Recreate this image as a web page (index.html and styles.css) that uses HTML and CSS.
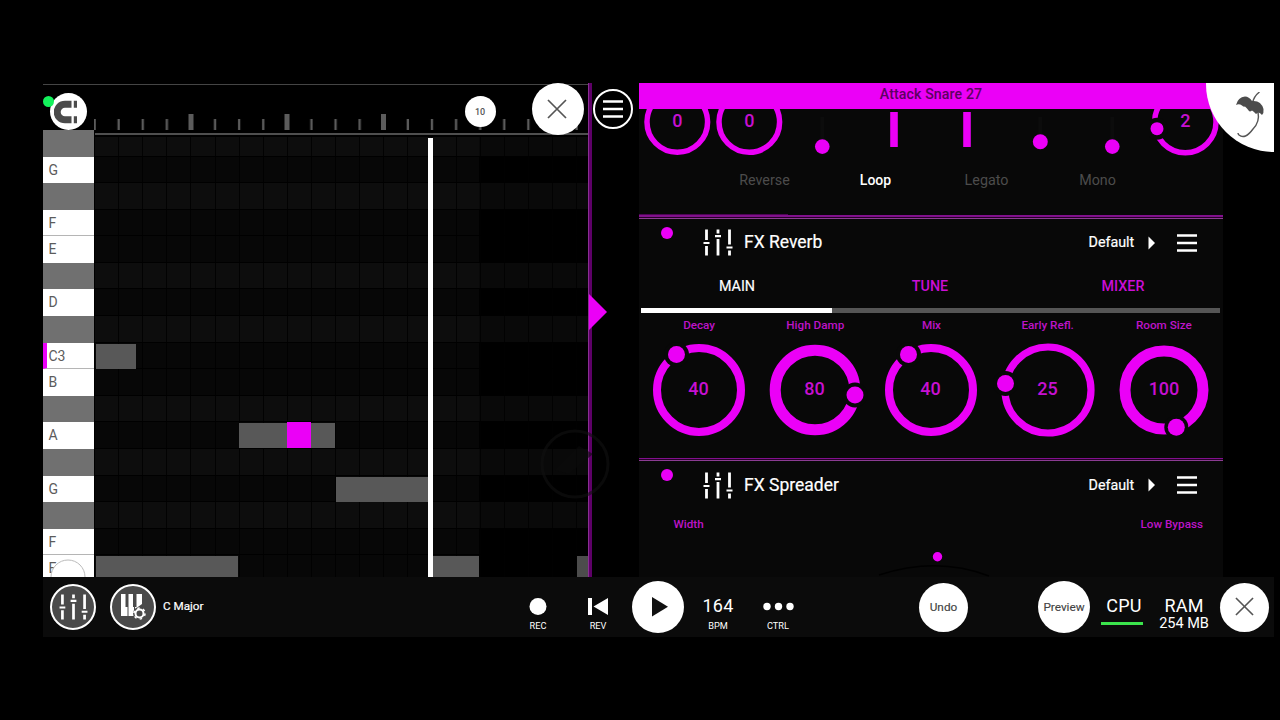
FILE: index.html
```html
<!DOCTYPE html>
<html lang="en">
<head>
<meta charset="utf-8">
<title>Piano roll</title>
<link rel="stylesheet" href="styles.css">
</head>
<body>
<svg width="0" height="0" class="defs">
  <defs>
    <symbol id="mixer" viewBox="0 0 30 27">
      <path d="M3.500 .500v10.500M3.500 17v9.500M15 .500v4M15 10v16.500M26.500 .500v15M26.500 21.500v5" fill="none" stroke="#fff" stroke-width="2.800"/>
      <path d="M.500 14h6M12 7.200h6M23.500 18.500h6" fill="none" stroke="#fff" stroke-width="2.200"/>
    </symbol>
    <symbol id="cross" viewBox="0 0 20 20"><path d="M1 1L19 19M19 1L1 19" stroke="#555" stroke-width="1.700"/></symbol>
    <symbol id="lines" viewBox="0 0 20 18"><path d="M0 1.500h20M0 9h20M0 16.500h20" stroke="#fff" stroke-width="2.600"/></symbol>
  </defs>
</svg>
<div class="app">
  <main class="main">
    <section class="roll">
      <header class="ruler">
        <svg class="ticks" width="494" height="16">
          <defs><pattern id="beat" width="96.4" height="16" patternUnits="userSpaceOnUse" x="-3">
            <path d="M2.500 5h2.300v11h-2.300zM26.500 5h2.300v11h-2.300zM50.600 5h2.300v11h-2.300zM74.700 5h2.300v11h-2.300z" fill="#5c5c5c"/>
          </pattern></defs>
          <rect width="494" height="16" fill="url(#beat)"/>
          <path d="M94.500 0h5v16h-5zM190.500 0h5v16h-5zM287 0h5v16h-5z" fill="#5c5c5c"/>
        </svg>
      </header>
      <div class="board">
        <div class="keys">
          <div class="key dark"></div><div class="key">G</div><div class="key dark"></div><div class="key line">F</div><div class="key">E</div>
          <div class="key dark"></div><div class="key">D</div><div class="key dark"></div><div class="key line root">C3</div><div class="key">B</div>
          <div class="key dark"></div><div class="key">A</div><div class="key dark"></div><div class="key">G</div><div class="key dark"></div>
          <div class="key line">F</div><div class="key">E</div>
          <svg class="keydial" width="36" height="18"><circle cx="18" cy="18" r="17" fill="#fff" stroke="#bbb"/></svg>
        </div>
        <div class="field">
          <div class="row dark"></div><div class="row"></div><div class="row dark"></div><div class="row"></div><div class="row"></div>
          <div class="row dark"></div><div class="row"></div><div class="row dark"></div><div class="row"></div><div class="row"></div>
          <div class="row dark"></div><div class="row"></div><div class="row dark"></div><div class="row"></div><div class="row dark"></div>
          <div class="row"></div><div class="row"></div>
          <div class="edge"></div>
          <div class="note n1"></div><div class="note n2"></div><div class="note n3"></div><div class="note n4"></div>
          <div class="note n5"></div><div class="note n6"></div><div class="note n7"></div>
          <div class="playhead"></div>
        </div>
      </div>
      <div class="snap"><svg width="24" height="24" viewBox="0 0 24 24"><path d="M17.500 4.200H11a7.800 7.800 0 0 0 0 15.600h6.500" fill="none" stroke="#4b4b4b" stroke-width="7"/><path d="M19.800 .700h3.200v7h-3.200zM19.800 16.300h3.200v7h-3.200z" fill="#4b4b4b"/></svg></div>
      <i class="led"></i>
      <div class="marker">10</div>
      <div class="close-roll"><svg width="20" height="20"><use href="#cross"/></svg></div>
    </section>
    <div class="divider"><svg class="arrow" width="18" height="36"><path d="M0 0L18 18L0 36z" fill="#eb00f7"/></svg></div>
    <div class="gutter"><div class="menu-round"><svg width="20" height="18"><use href="#lines"/></svg></div></div>
    <section class="panel">
      <h1 class="title">Attack Snare 27</h1>
      <div class="controls">
        <svg viewBox="0 0 72.6 50"><circle cx="36.300" cy="13" r="30.300" class="ring w5"/><text x="36.300" y="18" class="val">0</text></svg>
        <svg viewBox="0 0 72.6 50"><circle cx="36.300" cy="13" r="30.300" class="ring w5"/><text x="36.300" y="18" class="val">0</text></svg>
        <svg viewBox="0 0 72.6 50"><path d="M36.300 8v22" stroke="#0c0c0c" stroke-width="4"/><circle cx="36.300" cy="37.600" r="7.300" class="dot"/></svg>
        <svg viewBox="0 0 72.6 50"><path d="M36 3v35" stroke="#eb00f7" stroke-width="7.600"/></svg>
        <svg viewBox="0 0 72.6 50"><path d="M36 3v35" stroke="#eb00f7" stroke-width="7.600"/></svg>
        <svg viewBox="0 0 72.6 50"><path d="M36.300 8v18" stroke="#0c0c0c" stroke-width="4"/><circle cx="36.300" cy="32.800" r="7.500" class="dot"/></svg>
        <svg viewBox="0 0 72.6 50"><path d="M36.300 8v22" stroke="#0c0c0c" stroke-width="4"/><circle cx="36.300" cy="37.600" r="7.300" class="dot"/></svg>
        <svg viewBox="0 0 72.6 50"><circle cx="36.300" cy="13" r="30.700" class="ring w5"/><circle cx="8" cy="19.700" r="11" class="gap"/><circle cx="8" cy="19.700" r="6.500" class="dot"/><text x="36.300" y="18" class="val">2</text></svg>
      </div>
      <div class="modes"><span>Reverse</span><span class="on">Loop</span><span>Legato</span><span>Mono</span></div>
      <div class="rule"><i></i></div>
      <div class="fx-head">
        <i class="power"></i><svg class="mix" width="30" height="27"><use href="#mixer"/></svg><h2>FX Reverb</h2>
        <span class="preset">Default</span><svg class="tri" width="8" height="14"><path d="M.500 .500L7 7L.500 13.500z" fill="#fff"/></svg><svg class="burger" width="20" height="18"><use href="#lines"/></svg>
      </div>
      <div class="tabs"><span class="on">MAIN</span><span>TUNE</span><span>MIXER</span></div>
      <div class="knobs">
        <div class="knob"><b>Decay</b><svg viewBox="0 0 116 104"><circle cx="58" cy="57" r="42" class="ring w8"/><circle cx="35.500" cy="21.500" r="12.500" class="gap"/><circle cx="35.500" cy="21.500" r="8.500" class="dot"/><text x="57.500" y="61.500" class="val">40</text></svg></div>
        <div class="knob"><b>High Damp</b><svg viewBox="0 0 116 104"><circle cx="58" cy="57" r="39.800" class="ring w11"/><circle cx="98" cy="62" r="12.500" class="gap"/><circle cx="98" cy="62" r="8.500" class="dot"/><text x="57.500" y="61.500" class="val">80</text></svg></div>
        <div class="knob"><b>Mix</b><svg viewBox="0 0 116 104"><circle cx="58" cy="57" r="42" class="ring w8"/><circle cx="35.500" cy="21.500" r="12.500" class="gap"/><circle cx="35.500" cy="21.500" r="8.500" class="dot"/><text x="57.500" y="61.500" class="val">40</text></svg></div>
        <div class="knob"><b>Early Refl.</b><svg viewBox="0 0 116 104"><circle cx="58" cy="57" r="43" class="ring w7"/><circle cx="15.500" cy="50.500" r="12.500" class="gap"/><circle cx="15.500" cy="50.500" r="8.500" class="dot"/><text x="57.500" y="61.500" class="val">25</text></svg></div>
        <div class="knob"><b>Room Size</b><svg viewBox="0 0 116 104"><circle cx="58" cy="57" r="39" class="ring w11"/><circle cx="70.300" cy="94.300" r="12" class="gap"/><circle cx="70.300" cy="94.300" r="8.500" class="dot"/><text x="58" y="61.500" class="val">100</text></svg></div>
      </div>
      <div class="rule low"></div>
      <div class="fx-head">
        <i class="power"></i><svg class="mix" width="30" height="27"><use href="#mixer"/></svg><h2>FX Spreader</h2>
        <span class="preset">Default</span><svg class="tri" width="8" height="14"><path d="M.500 .500L7 7L.500 13.500z" fill="#fff"/></svg><svg class="burger" width="20" height="18"><use href="#lines"/></svg>
      </div>
      <div class="spread"><b>Width</b><b>Low Bypass</b></div>
      <svg class="stage" width="584" height="44"><path d="M240 41Q298 22 350 42" fill="none" stroke="#000" stroke-width="1.500"/><circle cx="298.500" cy="22.700" r="4.700" class="dot"/></svg>
    </section>
    <div class="corner">
      <svg width="30" height="48" viewBox="0 0 30 48"><path d="M24.500 0Q19 4 17.500 11" fill="none" stroke="#555" stroke-width="1.400"/><path d="M1 13Q3 5 10 4.500Q14 4.500 17 9Q26 8 28.500 17Q29 21 27 23Q25 20.500 23.500 20.500Q22 21 21 22Q19 19.500 17 18.500Q15 20 14 19Q12 16 10 14.500Q8 15 7 13.500Q4 11.500 1 13z" fill="#4c4c4c"/><path d="M23 20Q25 30 18 37Q10 48 4 43Q3 42 3 41" fill="none" stroke="#555" stroke-width="1.400"/></svg>
    </div>
    <svg class="watermark" width="90" height="80"><circle cx="44" cy="40" r="33" fill="none" stroke="#111" stroke-width="3"/><path d="M24 46l24-24 14 8-24 20z" fill="#0b0b0b"/></svg>
  </main>
  <footer class="bar">
    <div class="group tools">
      <div class="cell"><div class="tool"><svg width="29" height="26"><use href="#mixer"/></svg></div></div>
      <div class="cell"><div class="tool"><svg width="28" height="28" viewBox="0 0 28 28"><path d="M2 1h4.500v13h2v9H2zM9.500 1H14v13h1v9H9.500v-9zM17.500 1H23v10l-7 5v-2h1.500z" fill="#fff"/><circle cx="20.500" cy="20.500" r="6.500" fill="#4a4a4a"/><circle cx="20.500" cy="20.500" r="4" fill="none" stroke="#fff" stroke-width="2"/><circle cx="20.500" cy="20.500" r="5.500" fill="none" stroke="#fff" stroke-width="1.600" stroke-dasharray="2.400 3.360"/></svg></div></div>
      <span class="scale">C Major</span>
    </div>
    <div class="group transport">
      <div class="cell stack"><svg width="20" height="20"><circle cx="10" cy="10.500" r="8.500" fill="#fff"/></svg><small>REC</small></div>
      <div class="cell stack"><svg width="20" height="20"><path d="M0 2h4v17H0zM20 2v17L5.500 10.500z" fill="#fff"/></svg><small>REV</small></div>
      <div class="cell"><div class="round big play"><svg width="16" height="20"><path d="M0 0L16 9.800L0 19.500z" fill="#111"/></svg></div></div>
      <div class="cell stack"><strong>164</strong><small>BPM</small></div>
      <div class="cell stack"><svg width="31" height="20"><circle cx="4" cy="10.500" r="3.700" fill="#fff"/><circle cx="15.500" cy="10.500" r="3.700" fill="#fff"/><circle cx="27" cy="10.500" r="3.700" fill="#fff"/></svg><small>CTRL</small></div>
    </div>
    <div class="group undo"><div class="cell"><div class="round">Undo</div></div></div>
    <div class="group status">
      <div class="cell"><div class="round big">Preview</div></div>
      <div class="cell stat"><strong>CPU</strong><i class="load"></i></div>
      <div class="cell stat"><strong>RAM</strong><span>254 MB</span></div>
      <div class="cell"><div class="round"><svg width="19" height="19"><use href="#cross"/></svg></div></div>
    </div>
  </footer>
</div>
</body>
</html>
```

FILE: styles.css
```css
* { box-sizing: border-box; }
body { margin: 0; background: #000; color: #fff; font-family: Roboto, "Liberation Sans", sans-serif; width: 1280px; height: 720px; overflow: hidden; }
svg { display: block; flex: none; }
.defs { position: absolute; }
.app { margin: 83px 0 0 43px; width: 1231px; height: 554px; display: flex; flex-direction: column; }
.main { display: flex; height: 494px; position: relative; }

.roll { width: 545px; height: 494px; display: flex; flex-direction: column; position: relative; }
.ruler { flex: none; border-top: 1px solid #454545; margin-top: 1px; height: 46px; display: flex; align-items: flex-end; padding-left: 51px; }
.board { display: flex; height: 447px; }
.keys { width: 51px; height: 447px; overflow: hidden; position: relative; background: #fff; }
.key { height: 26.580px; padding-left: 5.500px; font-size: 14px; line-height: 27px; color: #5c5c5c; background: #fff; }
.key.dark { background: #707070; }
.key.line { border-bottom: 1px solid #b5b5b5; }
.key.root { border-left: 4px solid #eb00f7; padding-left: 1.500px; }
.keydial { position: absolute; left: 7px; bottom: 0; }
.field { width: 493px; margin-left: 1px; height: 447px; position: relative; overflow: hidden; }
.row { height: 26.580px; border-bottom: 1px solid #000; background: repeating-linear-gradient(90deg, transparent 0 23.100px, #010101 23.100px 24.100px), linear-gradient(90deg, #070707 0 384px, #000 384px); }
.row.dark { background: repeating-linear-gradient(90deg, transparent 0 23.100px, #020202 23.100px 24.100px), linear-gradient(90deg, #0d0d0d 0 384px, #090909 384px); }
.edge { position: absolute; top: 0; left: 0; width: 493px; height: 7px; background: linear-gradient(#000 0 2.500px, #4f4f4f 2.500px 4.800px, #000 4.800px); }
.note { position: absolute; background: #585858; height: 25px; }
.n1 { left: 1px; top: 214px; width: 40px; }
.n2 { left: 144px; top: 293px; width: 95.500px; }
.n3 { left: 192px; top: 291.500px; width: 24px; height: 26px; background: #eb00f7; }
.n4 { left: 241px; top: 347px; width: 92px; }
.n5 { left: 1px; top: 426px; width: 142px; }
.n6 { left: 337px; top: 426px; width: 47px; }
.n7 { left: 482px; top: 426px; width: 11px; background: #4c4c4c; }
.playhead { position: absolute; left: 332.500px; top: 7.500px; width: 5px; height: 440px; background: #fff; }

.snap, .marker, .close-roll { position: absolute; border-radius: 50%; background: #fff; display: flex; align-items: center; justify-content: center; }
.snap { left: 7px; top: 10px; width: 37px; height: 37px; padding-right: 5px; }
.led { position: absolute; left: 0; top: 13px; width: 11px; height: 11px; border-radius: 50%; background: #13f25b; }
.marker { left: 421.500px; top: 13px; width: 31px; height: 31px; font-size: 9px; font-weight: 500; color: #555; }
.close-roll { left: 489px; top: 0; width: 52px; height: 52px; padding-right: 2px; }

.divider { width: 3.500px; background: linear-gradient(90deg, #8a2d94 0 1.500px, #5e0068 1.500px); position: relative; }
.arrow { position: absolute; left: 1px; top: 211px; }
.gutter { width: 48px; padding: 6px 0 0 2px; }
.menu-round { width: 40px; height: 40px; border: 2px solid #fff; border-radius: 50%; display: flex; align-items: center; justify-content: center; margin: -.500px 0 0 -.500px; }

.panel { width: 584px; margin-left: -.500px; height: 494px; background: #080808; display: flex; flex-direction: column; overflow: hidden; }
.title { margin: 0; height: 26px; flex: none; background: #eb00f7; color: #5c0062; font-size: 14.200px; font-weight: 500; line-height: 23.500px; text-align: center; letter-spacing: .100px; }
.controls { display: grid; grid-template-columns: repeat(8, 72.600px); height: 50px; flex: none; padding-left: 1.700px; }
.controls svg { width: 72.600px; height: 50px; }
.ring { fill: none; stroke: #eb00f7; }
.w5 { stroke-width: 5.500px; }
.w7 { stroke-width: 7.200px; }
.w8 { stroke-width: 8px; }
.w11 { stroke-width: 11px; }
.gap { fill: #080808; }
.dot { fill: #eb00f7; }
.val { fill: #c710d1; font-size: 18px; font-weight: 500; text-anchor: middle; }
.modes { display: grid; grid-template-columns: repeat(4, 111px); padding-left: 70px; height: 54.500px; flex: none; text-align: center; font-size: 14.300px; line-height: 43.500px; color: #4c4c4c; }
.modes .on, .tabs .on { color: #fff; }
.modes .on { font-weight: 500; font-size: 14px; }
.rule { height: 5px; flex: none; background: linear-gradient(#080808 0 1.500px, #82108d 1.500px 3px, #250028 3px 3.800px, #8b3c92 3.800px); }
.rule i { display: block; width: 149px; height: 1.500px; background: #4d0755; }
.fx-head { display: flex; height: 49px; flex: none; align-items: center; padding: 0 0 1px 21.500px; }
.power { width: 12px; height: 12px; border-radius: 50%; background: #eb00f7; margin-top: -20px; }
.mix { margin-left: 30.500px; }
.fx-head h2 { margin: 0 0 0 11px; width: 344.500px; font-size: 17.500px; font-weight: 400; -webkit-text-stroke: .200px #fff; position: relative; top: -.500px; }
.preset { font-size: 14.300px; -webkit-text-stroke: .200px #fff; width: 59px; position: relative; top: -.500px; }
.burger { margin-left: 21.500px; }
.tabs { display: grid; grid-template-columns: 193px 193px 193px; width: 579px; margin-left: 1.500px; height: 45.500px; flex: none; text-align: center; font-size: 14.300px; line-height: 37.500px; color: #cb0ed6; border-bottom: 5px solid; border-image: linear-gradient(90deg, #fff 33.300%, #555 33.300%) 5; font-weight: 500; }
.tabs .on { font-weight: 400; -webkit-text-stroke: .200px #fff; }
.knobs { display: grid; grid-template-columns: repeat(5, 116.200px); padding-left: 2px; height: 143px; flex: none; }
.knob b { display: block; height: 20px; line-height: 24px; text-align: center; }
.knob b, .spread b { font-size: 11.700px; font-weight: 500; color: #bd14c7; }
.knob svg { width: 116px; height: 104px; }
.spread { display: flex; justify-content: space-between; padding: 7px 20px 0 34.500px; height: 24px; flex: none; line-height: 14px; }
.corner { position: absolute; right: 0; top: 0; width: 68.500px; height: 68.500px; border-bottom-left-radius: 68.500px; background: #fff; padding: 9px 0 0 29.500px; }
.watermark { position: absolute; left: 488px; top: 341px; opacity: .6; pointer-events: none; }

.bar { height: 60px; display: flex; background: #0b0b0b; }
.group { display: flex; }
.tools { width: 465px; align-items: center; }
.transport { width: 405.500px; }
.undo { width: 120.500px; }
.cell { width: 60px; height: 60px; display: flex; align-items: center; justify-content: center; }
.tool { width: 46px; height: 46px; border: 2px solid #fff; border-radius: 50%; background: #4a4a4a; display: flex; align-items: center; justify-content: center; }
.scale { font-size: 11.700px; -webkit-text-stroke: .200px #fff; margin-top: -2px; }
.stack { flex-direction: column; justify-content: flex-start; padding-top: 19px; }
.stack strong, .stat strong { font-size: 18px; font-weight: 400; line-height: 20px; letter-spacing: .200px; }
.stack small { font-size: 9.200px; line-height: 12px; margin-top: 4px; }
.round { width: 49px; height: 49px; border-radius: 50%; background: #fff; color: #444; font-size: 11.800px; padding-bottom: 1px; display: flex; align-items: center; justify-content: center; flex: none; -webkit-text-stroke: .150px #444; }
.round.big { width: 52px; height: 52px; }
.round.play { padding-left: 3px; }
.stat { flex-direction: column; justify-content: flex-start; padding-top: 19px; white-space: nowrap; }
.stat span { font-size: 14.500px; line-height: 16px; }
.load { width: 42px; height: 2.500px; background: #3be44c; margin: 6px 4px 0 0; }
```
